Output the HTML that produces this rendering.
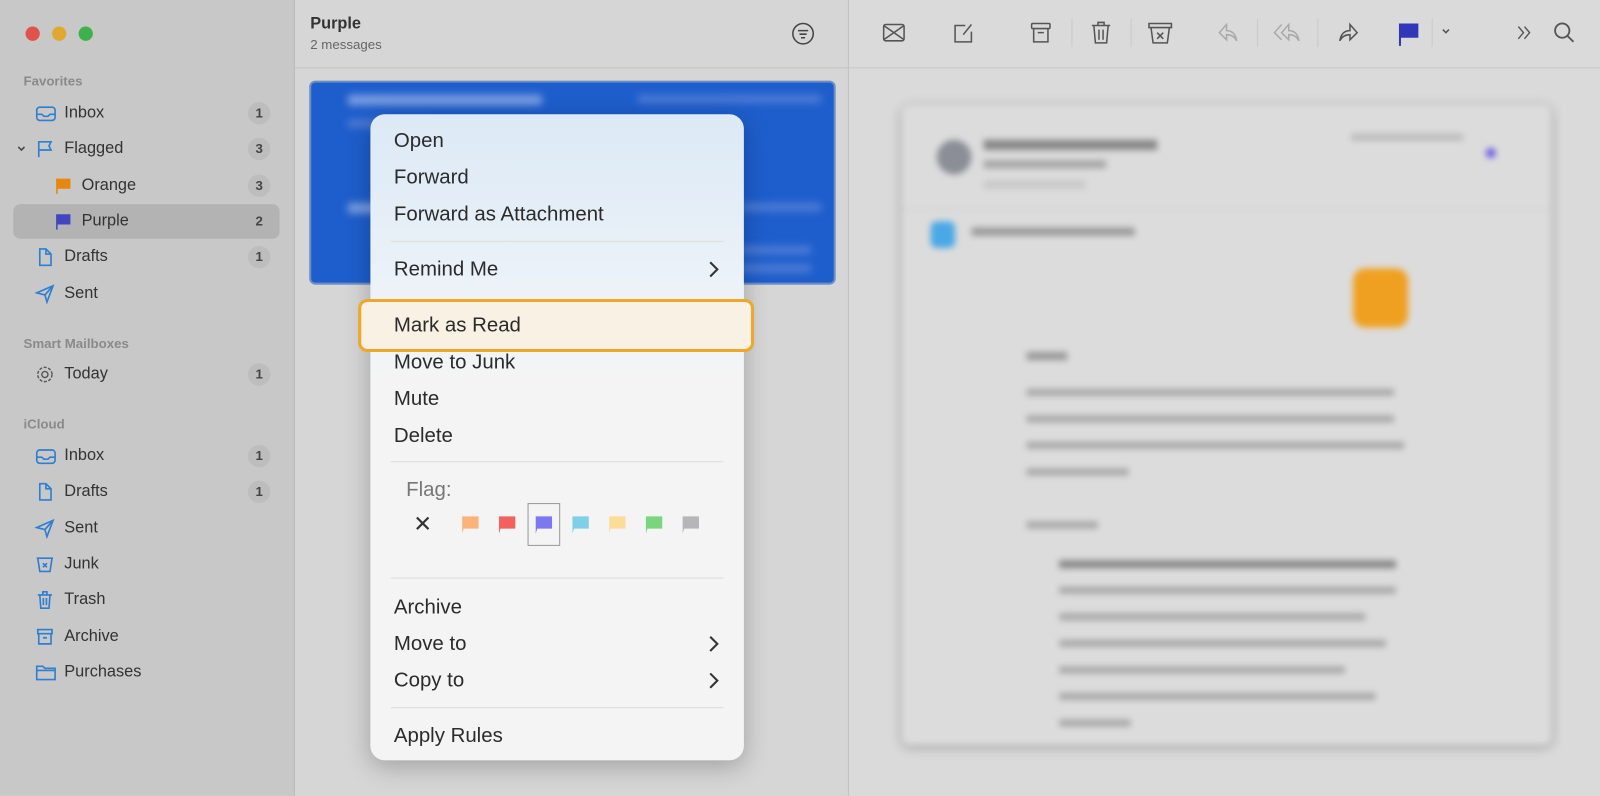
<!DOCTYPE html>
<html><head><meta charset="utf-8"><style>
*{margin:0;padding:0;box-sizing:border-box}
body{width:1600px;height:795px;overflow:hidden;font-family:"Liberation Sans",sans-serif;background:#d9d9d9;position:relative}
#wrap{position:absolute;left:0;top:0;width:1568px;height:780px;transform:scale(1.0204);transform-origin:0 0}
.abs{position:absolute}
#side{left:0;top:0;width:289px;height:780px;background:#c8c8c8;border-right:1px solid #b8b8b8}
.sec{position:absolute;left:23px;font-size:13px;font-weight:bold;color:#8a8a8a}
.row{position:absolute;left:0;width:289px;height:34px}
.row .t{position:absolute;left:63px;top:8px;font-size:16px;color:#333}
.row svg{position:absolute;left:34px;top:7px}
.badge{position:absolute;left:243px;top:6px;width:22px;height:22px;border-radius:11px;background:#bdbdbd;font-size:13px;font-weight:bold;color:#444;text-align:center;line-height:22px}
#mid{left:289px;top:0;width:543px;height:780px;background:#d6d6d6;border-right:1px solid #c2c2c2}
#right{left:832px;top:0;width:736px;height:780px;background:#dadada}
.menu{left:363px;top:112px;width:366px;height:633px;border-radius:14px;background:linear-gradient(#dce9f6 0px,#eef3f8 190px,#f4f4f4 260px,#f4f4f4);box-shadow:0 6px 24px rgba(0,0,0,.25)}
.mi{position:absolute;left:23px;font-size:20px;color:#2b2b2b;line-height:24px}
.sep{position:absolute;left:20px;right:20px;height:1px;background:#dcdcdc}
.chev{position:absolute;right:24px}
.tb{position:absolute;top:20px}
.vs{position:absolute;top:18px;width:1px;height:28px;background:#c9c9c9}
</style></head><body><div id="wrap">
<div id="side" class="abs">
 <div class="abs" style="left:25px;top:26px;width:14px;height:14px;border-radius:7px;background:#e0534c"></div>
 <div class="abs" style="left:51px;top:26px;width:14px;height:14px;border-radius:7px;background:#dfa92f"></div>
 <div class="abs" style="left:77px;top:26px;width:14px;height:14px;border-radius:7px;background:#3fb14a"></div>
 <div class="sec" style="top:72px">Favorites</div>
 <div class="row" style="top:94px"><svg width="22" height="20" viewBox="0 0 22 20" fill="none" stroke="#2f7fd0" stroke-width="1.6"><rect x="2" y="4" width="18" height="13" rx="3"/><path d="M2 11h5l2 2h4l2-2h5"/></svg><span class="t">Inbox</span><span class="badge">1</span></div>
 <div class="row" style="top:129px"><svg style="left:16px" width="10" height="20" viewBox="0 0 10 20" fill="none" stroke="#444" stroke-width="1.5"><path d="M2 8l3 3 3-3"/></svg><svg width="20" height="20" viewBox="0 0 20 20" fill="none" stroke="#2f7fd0" stroke-width="1.6"><path d="M4 18V3h12l-2 4 2 4H4"/></svg><span class="t">Flagged</span><span class="badge">3</span></div>
 <div class="row" style="top:165px"><svg style="left:53px" width="18" height="20" viewBox="0 0 18 20"><path d="M2 18V3h14v10H3.5v5z" fill="#e8860e"/></svg><span class="t" style="left:80px">Orange</span><span class="badge">3</span></div>
 <div class="abs" style="left:13px;top:200px;width:261px;height:34px;border-radius:7px;background:#b3b3b3"></div>
 <div class="row" style="top:200px"><svg style="left:53px" width="18" height="20" viewBox="0 0 18 20"><path d="M2 18V3h14v10H3.5v5z" fill="#4145c0"/></svg><span class="t" style="left:80px">Purple</span><span class="badge" style="background:none">2</span></div>
 <div class="row" style="top:235px"><svg width="20" height="20" viewBox="0 0 20 20" fill="none" stroke="#2f7fd0" stroke-width="1.6"><path d="M5 2h6l5 5v11H5z"/><path d="M11 2v5h5"/></svg><span class="t">Drafts</span><span class="badge">1</span></div>
 <div class="row" style="top:271px"><svg width="20" height="20" viewBox="0 0 20 20" fill="none" stroke="#2f7fd0" stroke-width="1.6"><path d="M2 9l16-7-6 16-2-7z"/><path d="M10 11l8-9"/></svg><span class="t">Sent</span></div>
 <div class="sec" style="top:329px">Smart Mailboxes</div>
 <div class="row" style="top:350px"><svg width="20" height="20" viewBox="0 0 20 20" fill="none" stroke="#555" stroke-width="1.4"><circle cx="10" cy="10" r="3"/><circle cx="10" cy="10" r="7" stroke-dasharray="3 1.5"/></svg><span class="t">Today</span><span class="badge">1</span></div>
 <div class="sec" style="top:408px">iCloud</div>
 <div class="row" style="top:430px"><svg width="22" height="20" viewBox="0 0 22 20" fill="none" stroke="#2f7fd0" stroke-width="1.6"><rect x="2" y="4" width="18" height="13" rx="3"/><path d="M2 11h5l2 2h4l2-2h5"/></svg><span class="t">Inbox</span><span class="badge">1</span></div>
 <div class="row" style="top:465px"><svg width="20" height="20" viewBox="0 0 20 20" fill="none" stroke="#2f7fd0" stroke-width="1.6"><path d="M5 2h6l5 5v11H5z"/><path d="M11 2v5h5"/></svg><span class="t">Drafts</span><span class="badge">1</span></div>
 <div class="row" style="top:501px"><svg width="20" height="20" viewBox="0 0 20 20" fill="none" stroke="#2f7fd0" stroke-width="1.6"><path d="M2 9l16-7-6 16-2-7z"/><path d="M10 11l8-9"/></svg><span class="t">Sent</span></div>
 <div class="row" style="top:536px"><svg width="20" height="20" viewBox="0 0 20 20" fill="none" stroke="#2f7fd0" stroke-width="1.6"><path d="M2 4h16M3 4l2 13h10l2-13M8 9l4 4M12 9l-4 4"/></svg><span class="t">Junk</span></div>
 <div class="row" style="top:571px"><svg width="20" height="20" viewBox="0 0 20 20" fill="none" stroke="#2f7fd0" stroke-width="1.6"><path d="M3 5h14M8 5V2h4v3M5 5l1 13h8l1-13M8.5 8v7M11.5 8v7"/></svg><span class="t">Trash</span></div>
 <div class="row" style="top:607px"><svg width="20" height="20" viewBox="0 0 20 20" fill="none" stroke="#2f7fd0" stroke-width="1.6"><rect x="3" y="3" width="14" height="4"/><path d="M4 7v10h12V7M8 11h4"/></svg><span class="t">Archive</span></div>
 <div class="row" style="top:642px"><svg width="22" height="20" viewBox="0 0 22 20" fill="none" stroke="#2f7fd0" stroke-width="1.6"><path d="M2 4h6l2 2h10v11H2z M2 8h18"/></svg><span class="t">Purchases</span></div>
</div>

<div id="mid" class="abs">
 <div class="abs" style="left:15px;top:15px;font-size:16px;font-weight:bold;color:#333">Purple</div>
 <div class="abs" style="left:15px;top:36px;font-size:13px;color:#666">2 messages</div>
 <svg class="abs" style="left:486px;top:21px" width="24" height="24" viewBox="0 0 24 24" fill="none" stroke="#444" stroke-width="1.5"><circle cx="12" cy="12" r="10"/><path d="M7 9h10M8.5 12.5h7M10 16h4"/></svg>
 <div class="abs" style="left:0;top:66px;width:543px;height:1px;background:#c4c4c4"></div>
 <div class="abs" style="left:14px;top:79px;width:516px;height:200px;border-radius:6px;background:#1e5ecc;border:2px solid #6f8fc4;overflow:hidden">
  <div style="filter:blur(4px)">
   <div class="abs" style="left:36px;top:12px;width:190px;height:10px;background:#7d9fe2"></div>
   <div class="abs" style="left:320px;top:12px;width:180px;height:8px;background:#4f7cd6"></div>
   <div class="abs" style="left:36px;top:36px;width:80px;height:8px;background:#4f7cd6"></div>
   <div class="abs" style="left:36px;top:118px;width:60px;height:10px;background:#7d9fe2"></div>
   <div class="abs" style="left:420px;top:118px;width:80px;height:8px;background:#4f7cd6"></div>
   <div class="abs" style="left:420px;top:160px;width:70px;height:8px;background:#4f7cd6"></div>
   <div class="abs" style="left:420px;top:178px;width:70px;height:8px;background:#4f7cd6"></div>
  </div>
 </div>
</div>

<div id="right" class="abs">
 <div class="abs" style="left:0;top:66px;width:736px;height:1px;background:#c8c8c8"></div>
 <svg class="tb" style="left:32px" width="24" height="24" viewBox="0 0 24 24" fill="none" stroke="#555" stroke-width="1.5"><rect x="2" y="4" width="20" height="16" rx="2"/><path d="M2 5l20 14M22 5L2 19"/></svg>
 <svg class="tb" style="left:100px" width="24" height="24" viewBox="0 0 24 24" fill="none" stroke="#555" stroke-width="1.5"><path d="M14 5H4v16h16V11"/><path d="M12 14l8-10"/></svg>
 <svg class="tb" style="left:176px" width="24" height="24" viewBox="0 0 24 24" fill="none" stroke="#555" stroke-width="1.5"><rect x="3" y="3" width="18" height="5" rx="1"/><path d="M5 8v13h14V8M9 12h6"/></svg>
 <div class="vs" style="left:218px"></div>
 <svg class="tb" style="left:235px" width="24" height="24" viewBox="0 0 24 24" fill="none" stroke="#555" stroke-width="1.5"><path d="M3 5h18M9 5V2h6v3M5 5l1.5 17h11L19 5M10 9v10M14 9v10"/></svg>
 <div class="vs" style="left:276px"></div>
 <svg class="tb" style="left:292px" width="26" height="24" viewBox="0 0 26 24" fill="none" stroke="#555" stroke-width="1.5"><path d="M2 3h22v4H2zM4 7l2 15h14l2-15M10 12l6 6M16 12l-6 6"/></svg>
 <svg class="tb" style="left:360px" width="24" height="24" viewBox="0 0 24 24" fill="none" stroke="#aaa" stroke-width="1.5"><path d="M10 4L3 12l7 7v-5c5 0 8 2 10 6-1-6-4-10-10-10z"/></svg>
 <div class="vs" style="left:400px"></div>
 <svg class="tb" style="left:414px" width="32" height="24" viewBox="0 0 32 24" fill="none" stroke="#aaa" stroke-width="1.5"><path d="M10 4L3 12l7 7M17 4l-7 8 7 7v-5c5 0 8 2 10 6-1-6-4-10-10-10z"/></svg>
 <div class="vs" style="left:459px"></div>
 <svg class="tb" style="left:477px" width="24" height="24" viewBox="0 0 24 24" fill="none" stroke="#555" stroke-width="1.5"><path d="M14 4l7 8-7 7v-5c-5 0-8 2-10 6 1-6 4-10 10-10z"/></svg>
 <svg class="tb" style="left:538px" width="22" height="26" viewBox="0 0 22 26"><path d="M2 25V3h18v14H3" fill="#3236b8"/><path d="M2 3v22" stroke="#3236b8" stroke-width="2"/></svg>
 <svg class="tb" style="left:580px;top:26px" width="10" height="10" viewBox="0 0 10 10" fill="none" stroke="#555" stroke-width="1.5"><path d="M2 3l3 3 3-3"/></svg>
 <div class="vs" style="left:571px"></div>
 <svg class="tb" style="left:652px" width="20" height="24" viewBox="0 0 20 24" fill="none" stroke="#555" stroke-width="1.4"><path d="M4 6l5 6-5 6M10 6l5 6-5 6"/></svg>
 <svg class="tb" style="left:689px" width="24" height="24" viewBox="0 0 24 24" fill="none" stroke="#555" stroke-width="1.8"><circle cx="10" cy="10" r="7"/><path d="M15 15l6 6"/></svg>
 <div class="abs" style="left:52px;top:103px;width:636px;height:627px;background:#dcdcdc;border-radius:8px;box-shadow:0 2px 10px rgba(0,0,0,.3);filter:blur(3px)">
  <div class="abs" style="left:34px;top:34px;width:34px;height:34px;border-radius:17px;background:#8b8e96"></div>
  <div class="abs" style="left:80px;top:34px;width:170px;height:10px;background:#888"></div>
  <div class="abs" style="left:80px;top:54px;width:120px;height:8px;background:#a5a5a5"></div>
  <div class="abs" style="left:80px;top:74px;width:100px;height:8px;background:#c8c8c8"></div>
  <div class="abs" style="left:440px;top:28px;width:110px;height:7px;background:#bcbcbc"></div>
  <div class="abs" style="left:572px;top:42px;width:10px;height:10px;border-radius:5px;background:#6c5ce0"></div>
  <div class="abs" style="left:0;top:102px;width:636px;height:1px;background:#cacaca"></div>
  <div class="abs" style="left:28px;top:114px;width:24px;height:26px;border-radius:6px;background:#4aa8e6"></div>
  <div class="abs" style="left:68px;top:120px;width:160px;height:8px;background:#999"></div>
  <div class="abs" style="left:442px;top:160px;width:54px;height:58px;border-radius:12px;background:#f0a020"></div>
  <div class="abs" style="left:122px;top:242px;width:40px;height:8px;background:#999"></div>
  <div class="abs" style="left:122px;top:278px;width:360px;height:7px;background:#a8a8a8"></div>
  <div class="abs" style="left:122px;top:304px;width:360px;height:7px;background:#a8a8a8"></div>
  <div class="abs" style="left:122px;top:330px;width:370px;height:7px;background:#a8a8a8"></div>
  <div class="abs" style="left:122px;top:356px;width:100px;height:7px;background:#a8a8a8"></div>
  <div class="abs" style="left:122px;top:408px;width:70px;height:7px;background:#a8a8a8"></div>
  <div class="abs" style="left:154px;top:446px;width:330px;height:8px;background:#888"></div>
  <div class="abs" style="left:154px;top:472px;width:330px;height:7px;background:#a8a8a8"></div>
  <div class="abs" style="left:154px;top:498px;width:300px;height:7px;background:#a8a8a8"></div>
  <div class="abs" style="left:154px;top:524px;width:320px;height:7px;background:#a8a8a8"></div>
  <div class="abs" style="left:154px;top:550px;width:280px;height:7px;background:#a8a8a8"></div>
  <div class="abs" style="left:154px;top:576px;width:310px;height:7px;background:#a8a8a8"></div>
  <div class="abs" style="left:154px;top:602px;width:70px;height:7px;background:#a8a8a8"></div>
 </div>
</div>

<div class="abs menu">
 <div class="mi" style="top:14px">Open</div>
 <div class="mi" style="top:50px">Forward</div>
 <div class="mi" style="top:86px">Forward as Attachment</div>
 <div class="sep" style="top:124px"></div>
 <div class="mi" style="top:140px">Remind Me</div>
 <svg class="chev" style="top:143px" width="12" height="18" viewBox="0 0 12 18" fill="none" stroke="#333" stroke-width="2"><path d="M3 2l7 7-7 7"/></svg>
 <div class="abs" style="left:-12px;top:181px;width:388px;height:52px;border:3px solid #f0a62a;border-radius:9px;background:#f9f1e3"></div>
 <div class="mi" style="top:195px">Mark as Read</div>
 <div class="mi" style="top:231px">Move to Junk</div>
 <div class="mi" style="top:267px">Mute</div>
 <div class="mi" style="top:303px">Delete</div>
 <div class="sep" style="top:340px"></div>
 <div class="mi" style="top:356px;left:35px;color:#777">Flag:</div>
 <div class="abs" style="left:42px;top:389px;font-size:22px;color:#333">✕</div>
 <div class="abs" style="left:154px;top:381px;width:32px;height:42px;border:1.5px solid #999"></div>
 <svg class="abs" style="left:88px;top:392px" width="300" height="20" viewBox="0 0 300 20">
  <g><path d="M2 19V2h16v12H3.5" fill="#fbb37a"/></g>
  <g transform="translate(36,0)"><path d="M2 19V2h16v12H3.5" fill="#f4605c"/></g>
  <g transform="translate(72,0)"><path d="M2 19V2h16v12H3.5" fill="#7b78f0"/></g>
  <g transform="translate(108,0)"><path d="M2 19V2h16v12H3.5" fill="#7fd0e6"/></g>
  <g transform="translate(144,0)"><path d="M2 19V2h16v12H3.5" fill="#fbdc98"/></g>
  <g transform="translate(180,0)"><path d="M2 19V2h16v12H3.5" fill="#7ad67e"/></g>
  <g transform="translate(216,0)"><path d="M2 19V2h16v12H3.5" fill="#b6b6b8"/></g>
 </svg>
 <div class="sep" style="top:454px"></div>
 <div class="mi" style="top:471px">Archive</div>
 <div class="mi" style="top:507px">Move to</div>
 <svg class="chev" style="top:510px" width="12" height="18" viewBox="0 0 12 18" fill="none" stroke="#333" stroke-width="2"><path d="M3 2l7 7-7 7"/></svg>
 <div class="mi" style="top:543px">Copy to</div>
 <svg class="chev" style="top:546px" width="12" height="18" viewBox="0 0 12 18" fill="none" stroke="#333" stroke-width="2"><path d="M3 2l7 7-7 7"/></svg>
 <div class="sep" style="top:581px"></div>
 <div class="mi" style="top:597px">Apply Rules</div>
</div>
</div></body></html>
